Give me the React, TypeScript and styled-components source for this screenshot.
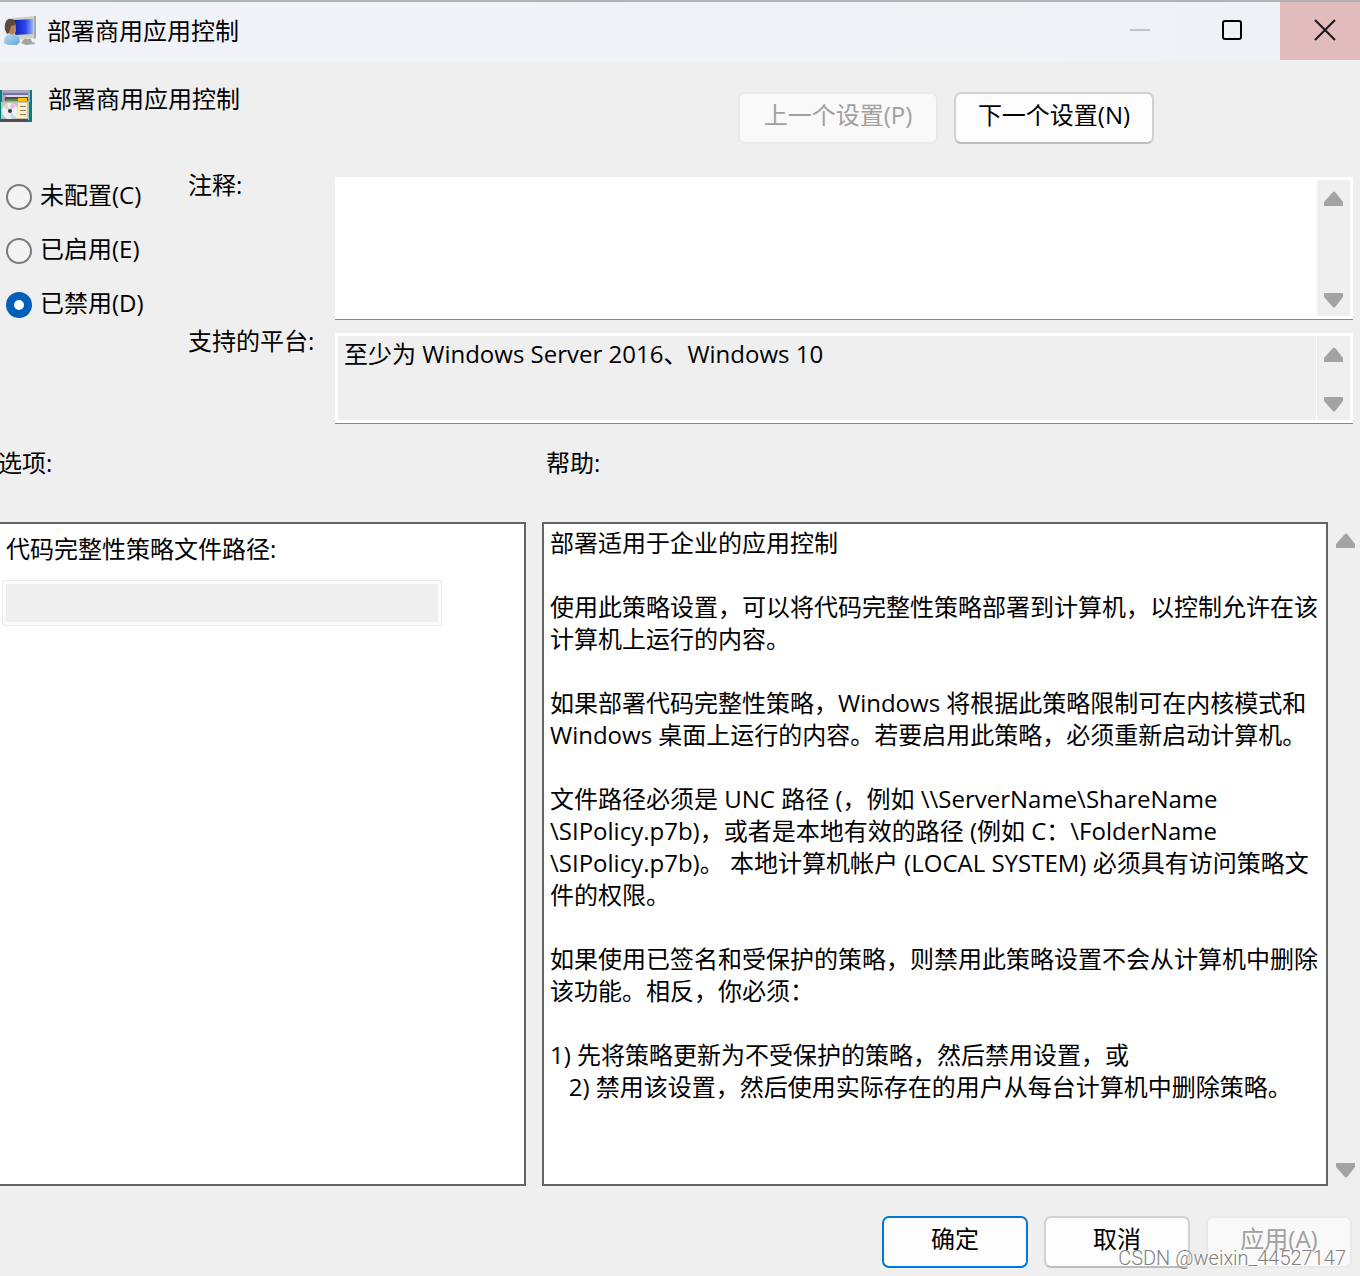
import React, { useState } from "react";
import styled, { createGlobalStyle, css } from "styled-components";

const uiFont = `"Open Sans", "Noto Sans CJK SC", sans-serif`;

const GlobalStyle = createGlobalStyle`
  *, *::before, *::after { box-sizing: border-box; }
  html, body { margin: 0; background: #efefef; }
  body, button, input, textarea {
    font-family: ${uiFont};
    font-size: 24px;
    line-height: 32px;
    color: #000;
  }
`;

const Window = styled.div`
  position: relative;
  display: flex;
  flex-direction: column;
  min-height: 100vh;
  border-top: 2px solid #b2b2b2;
  background: #efefef;
  overflow: hidden;
`;

const TitleBar = styled.header`
  display: flex;
  align-items: flex-start;
  height: 60px;
  background: linear-gradient(90deg, #f0f2fa 0%, #f0f3fa 30%, #eef3f6 75%, #ebf1f6 100%);
`;

const Title = styled.h1`
  display: flex;
  align-items: center;
  gap: 11px;
  flex: 1;
  height: 58px;
  margin: 0;
  padding-left: 4px;
  font-size: 24px;
  font-weight: 400;
`;

const CaptionButton = styled.button<{ $close?: boolean }>`
  display: flex;
  align-items: center;
  justify-content: center;
  width: ${(p) => (p.$close ? 80 : 92)}px;
  height: 56px;
  padding: ${(p) => (p.$close ? "0 0 0 10px" : "0 4px 0 0")};
  border: 0;
  background: transparent;
  ${(p) => p.$close && css`
    height: 58px;
    padding-bottom: 2px;
    background: #e2bcbd;
  `}
`;

const PolicyHeader = styled.section`
  display: flex;
  align-items: flex-start;
  height: 116px;
  padding: 28px 206px 0 0;
`;

const PolicyName = styled.h2`
  flex: 1;
  margin: -7px 0 0;
  padding: 0 0 0 16px;
  font-size: 24px;
  font-weight: 400;
`;

const HeaderButtons = styled.div`
  display: flex;
  gap: 16px;
  padding-top: 2px;
`;

const Button = styled.button<{ $wide?: boolean; $primary?: boolean }>`
  width: ${(p) => (p.$wide ? 200 : 146)}px;
  height: 52px;
  padding: 0 0 6px;
  border: 2px solid ${(p) => (p.$primary ? "#0078d4" : "#d0d0d0")};
  ${(p) => !p.$primary && css`border-bottom-color: #bcbcbc;`}
  border-radius: 7px;
  background: #fdfdfd;
  white-space: nowrap;

  &:disabled {
    border-color: #e9e9e9;
    background: #f9f9f9;
    color: #a0a0a0;
  }
`;

const Settings = styled.section`
  display: grid;
  grid-template-columns: 188px 147px 1fr;
  padding: 0 7px 0 0;
`;

const RadioGroup = styled.fieldset`
  display: flex;
  flex-direction: column;
  gap: 22px;
  margin: 0;
  padding: 1px 0 0 6px;
  border: 0;
  min-width: 0;
`;

const RadioLabel = styled.label`
  display: flex;
  align-items: center;
  gap: 8px;
  height: 32px;
  white-space: nowrap;
`;

const Radio = styled.input`
  appearance: none;
  flex: none;
  width: 26px;
  height: 26px;
  margin: 4px 0 0;
  border: 2px solid #7a7a7a;
  border-radius: 50%;
  background: #f3f3f3;

  &:checked {
    border: 8px solid #005fb8;
    background: #fff;
  }
`;

const FieldLabels = styled.div`
  display: flex;
  flex-direction: column;
  gap: 124px;
  margin-top: -9px;
`;

const Fields = styled.div`
  display: flex;
  flex-direction: column;
  gap: 13px;
  margin-top: -1px;
`;

const TextFrame = styled.div<{ $tall?: boolean }>`
  display: flex;
  height: ${(p) => (p.$tall ? 143 : 91)}px;
  padding: 3px;
  border-bottom: 1px solid #868686;
  background: #fff;
`;

const TextArea = styled.textarea`
  flex: 1;
  min-width: 0;
  padding: 2px 6px;
  border: 0;
  outline: 0;
  resize: none;
  overflow: hidden;
  background: #fff;

  &:read-only { background: #efefef; }
`;

const ScrollBar = styled.div`
  display: flex;
  flex: none;
  flex-direction: column;
  justify-content: space-between;
  width: 33px;
  margin-left: 1px;
  padding: 11px 0 8px;
  background: #efefef;
`;

const ScrollButton = styled.button`
  display: flex;
  align-items: center;
  justify-content: center;
  height: 16px;
  padding: 0;
  border: 0;
  background: transparent;
`;

const Panes = styled.section`
  display: grid;
  flex: 1;
  grid-template-columns: 526fr 818fr;
  grid-template-rows: 75px 1fr;
  column-gap: 16px;
  padding-top: 23px;
`;

const PaneTitle = styled.h3<{ $inset?: boolean }>`
  margin: 0;
  padding-left: ${(p) => (p.$inset ? 4 : 0)}px;
  ${(p) => !p.$inset && css`margin-left: -2px;`}
  font-size: 24px;
  font-weight: 400;
`;

const OptionsPane = styled.div`
  display: flex;
  flex-direction: column;
  gap: 15px;
  padding: 9px 2px;
  border: 2px solid #656565;
  border-left: 0;
  background: #fff;
`;

const PathLabel = styled.label`
  padding-left: 4px;
`;

const PathInput = styled.input`
  width: 440px;
  max-width: 100%;
  height: 46px;
  border: 1px solid #ebebeb;
  border-radius: 2px;
  background: #efefef;
  box-shadow: inset 0 0 0 3px #fbfbfb;
`;

const HelpArea = styled.div`
  display: flex;
  margin-right: -2px;
`;

const HelpPane = styled.div`
  flex: 1;
  min-width: 0;
  padding: 3px 0 3px 6px;
  border: 2px solid #656565;
  background: #fff;
  white-space: pre-wrap;
`;

const Footer = styled.footer`
  display: flex;
  justify-content: flex-end;
  gap: 16px;
  height: 90px;
  padding: 30px 8px 0;
`;

const Watermark = styled.span`
  position: absolute;
  right: 14px;
  bottom: 6px;
  font-family: Roboto, "Liberation Sans", sans-serif;
  font-weight: 300;
  font-size: 20px;
  line-height: 24px;
  color: #808080;
  text-shadow: 1px 1px 0 #fff;
  pointer-events: none;
`;

const UserMonitorIcon = () => (
  <svg width="32" height="32" viewBox="0 0 32 32" aria-hidden="true">
    <defs>
      <linearGradient id="screen" x1="0" y1="0" x2="1" y2="0">
        <stop offset="0" stopColor="#0c1cb4" />
        <stop offset="0.6" stopColor="#2d46e8" />
        <stop offset="1" stopColor="#8fb2f6" />
      </linearGradient>
      <linearGradient id="shirt" x1="0" y1="0" x2="1" y2="1">
        <stop offset="0" stopColor="#b8dcf5" />
        <stop offset="1" stopColor="#6ca4d4" />
      </linearGradient>
    </defs>
    <path d="M20 24h7l1 3 3 1v1l-9 1-5-2z" fill="#a5a5a0" />
    <path d="M7 3l25-2v22l-22 2z" fill="#d2d0c4" />
    <path d="M30 1h2v22l-2 1z" fill="#aaa99f" />
    <path d="M10 5l19-1v15l-18 1z" fill="url(#screen)" />
    <path d="M0 28c0-6 2-9 8-9s7 3 8 8l-3 3H4z" fill="url(#shirt)" />
    <path d="M5 17l3 3 4-3v-4H5z" fill="#b98661" />
    <ellipse cx="7" cy="12" rx="5" ry="7" fill="#b5805a" />
    <path d="M1 15C0 7 3 3 7 4c4 0 5 3 4 6l-4 1-2 7-2 1z" fill="#5c4a3c" />
  </svg>
);

const PolicyIcon = () => (
  <svg width="32" height="32" viewBox="0 0 32 32" aria-hidden="true" shapeRendering="crispEdges">
    <path fill="#008080" d="M0 0h32v32H0z" />
    <path fill="#a8a8c0" d="M2 0h28v12H2z" />
    <path fill="#7474a4" d="M3 3h25v2H3z" />
    <path fill="#d8d8e6" d="M6 5h22v2H6z" />
    <path fill="#4d4d4d" d="M5 7h23v4H5z" />
    <path fill="#5e8a50" d="M6 9h12v2H6z" />
    <path fill="#ffc400" d="M18 8h9v3h-9z" />
    <path fill="#c4c2bc" d="M1 12h28v18H1z" />
    <path fill="#505050" d="M0 29h28v3H0z" />
    <path fill="#fff0c4" d="M18 13h9v15H16v-4h2z" />
    <path fill="#8b7960" d="M20 16h6v1h-6zM20 20h6v1h-6zM20 24h6v1h-6z" />
    <g shapeRendering="auto">
      <circle cx="10" cy="21" r="8" fill="#f1eff4" />
      <path fill="#c4e8c4" d="M10 21L3 17l4-4z" />
      <path fill="#e7bfe5" d="M10 21l1-8 5 3z" />
      <path fill="#bfd7ee" d="M10 21l5 6-4 2z" />
      <circle cx="10" cy="21" r="2" fill="#383838" />
    </g>
  </svg>
);

const Arrow = ({ down = false }: { down?: boolean }) => (
  <svg width="20" height="16" viewBox="0 0 20 16" aria-hidden="true">
    <path
      d={down ? "M0 1h19v4l-7 9q-2 3-4 0L0 5z" : "M0 15h19v-4l-7-9q-2-3-4 0L0 11z"}
      fill="#a3a3a3"
    />
  </svg>
);

const ScrollArrows = () => (
  <>
    <ScrollButton type="button" aria-label="向上滚动"><Arrow /></ScrollButton>
    <ScrollButton type="button" aria-label="向下滚动"><Arrow down /></ScrollButton>
  </>
);

const states = ["未配置(C)", "已启用(E)", "已禁用(D)"];

const helpText = [
  "部署适用于企业的应用控制",
  "",
  "使用此策略设置，可以将代码完整性策略部署到计算机，以控制允许在该计算机上运行的内容。",
  "",
  "如果部署代码完整性策略，Windows 将根据此策略限制可在内核模式和 Windows 桌面上运行的内容。若要启用此策略，必须重新启动计算机。",
  "",
  "文件路径必须是 UNC 路径 (，例如 \\\\ServerName\\ShareName",
  "\\SIPolicy.p7b)，或者是本地有效的路径 (例如 C：\\FolderName",
  "\\SIPolicy.p7b)。 本地计算机帐户 (LOCAL SYSTEM) 必须具有访问策略文件的权限。",
  "",
  "如果使用已签名和受保护的策略，则禁用此策略设置不会从计算机中删除该功能。相反，你必须：",
  "",
  "1) 先将策略更新为不受保护的策略，然后禁用设置，或",
  "   2) 禁用该设置，然后使用实际存在的用户从每台计算机中删除策略。",
].join("\n");

export default function App() {
  const [state, setState] = useState(states[2]);

  return (
    <Window lang="zh-CN">
      <GlobalStyle />
      <TitleBar>
        <Title><UserMonitorIcon />部署商用应用控制</Title>
        <CaptionButton type="button" aria-label="最小化" disabled>
          <svg width="22" height="22"><path d="M1 11h20" stroke="#bfc3c5" strokeWidth="2" /></svg>
        </CaptionButton>
        <CaptionButton type="button" aria-label="最大化">
          <svg width="22" height="22">
            <rect x="2" y="2" width="18" height="18" rx="2" fill="none" stroke="#000" strokeWidth="2" />
          </svg>
        </CaptionButton>
        <CaptionButton type="button" aria-label="关闭" $close>
          <svg width="22" height="22"><path d="M1 1l20 20M21 1L1 21" stroke="#1c1718" strokeWidth="2" /></svg>
        </CaptionButton>
      </TitleBar>

      <PolicyHeader>
        <PolicyIcon />
        <PolicyName>部署商用应用控制</PolicyName>
        <HeaderButtons>
          <Button type="button" $wide disabled>上一个设置(P)</Button>
          <Button type="button" $wide>下一个设置(N)</Button>
        </HeaderButtons>
      </PolicyHeader>

      <Settings>
        <RadioGroup aria-label="策略状态">
          {states.map((name) => (
            <RadioLabel key={name}>
              <Radio type="radio" name="state" checked={state === name} onChange={() => setState(name)} />
              {name}
            </RadioLabel>
          ))}
        </RadioGroup>
        <FieldLabels>
          <label htmlFor="comment">注释:</label>
          <label htmlFor="platform">支持的平台:</label>
        </FieldLabels>
        <Fields>
          <TextFrame $tall>
            <TextArea id="comment" />
            <ScrollBar><ScrollArrows /></ScrollBar>
          </TextFrame>
          <TextFrame>
            <TextArea id="platform" readOnly value="至少为 Windows Server 2016、Windows 10" />
            <ScrollBar><ScrollArrows /></ScrollBar>
          </TextFrame>
        </Fields>
      </Settings>

      <Panes>
        <PaneTitle>选项:</PaneTitle>
        <PaneTitle $inset>帮助:</PaneTitle>
        <OptionsPane>
          <PathLabel htmlFor="path">代码完整性策略文件路径:</PathLabel>
          <PathInput id="path" type="text" disabled />
        </OptionsPane>
        <HelpArea>
          <HelpPane>{helpText}</HelpPane>
          <ScrollBar><ScrollArrows /></ScrollBar>
        </HelpArea>
      </Panes>

      <Footer>
        <Button type="button" $primary>确定</Button>
        <Button type="button">取消</Button>
        <Button type="button" disabled>应用(A)</Button>
      </Footer>
      <Watermark>CSDN @weixin_44527147</Watermark>
    </Window>
  );
}
